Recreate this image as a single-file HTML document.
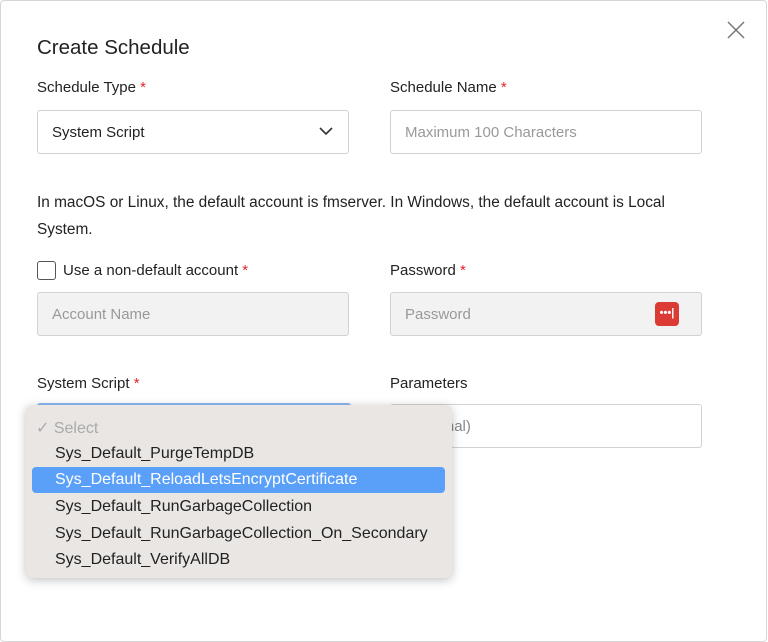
<!DOCTYPE html><html><head><style>
body{margin:0;width:768px;height:611px;background:#fff;font-family:"Liberation Sans",sans-serif;position:relative;overflow:hidden;color:#222}
.modal{position:absolute;left:0;top:0;width:765px;height:640px;border:1px solid #d6d6d6;border-radius:4px;background:#fff}
.a{position:absolute}
.lbl{font-size:15px;color:#222}
.r{color:#e0262a}
.in{position:absolute;box-sizing:border-box;height:44px;border:1px solid #d2d2d2;border-radius:3px;font-size:15px;padding-left:14px;line-height:42px;color:#999}
.item{position:absolute;left:29px;font-size:16px;color:#222}
</style></head><body>
<div class="modal"></div>
<svg class="a" style="left:727px;top:21px" width="18" height="18"><path d="M1 1L17 17M17 1L1 17" stroke="#777" stroke-width="1.5"/></svg>
<div class="a" style="left:37px;top:36px;font-size:20.5px">Create Schedule</div>
<div class="a lbl" style="left:37px;top:79px">Schedule Type <span class="r">*</span></div>
<div class="a lbl" style="left:390px;top:79px">Schedule Name <span class="r">*</span></div>
<div class="in" style="left:37px;top:110px;width:312px;color:#222;line-height:44px">System Script</div>
<svg class="a" style="left:319px;top:127px" width="14" height="9"><path d="M1 1L7 7L13 1" stroke="#333" stroke-width="1.6" fill="none"/></svg>
<div class="in" style="left:390px;top:110px;width:312px;line-height:44px">Maximum 100 Characters</div>
<div class="a" style="left:37px;top:189px;font-size:15.4px;line-height:27px;width:680px">In macOS or Linux, the default account is fmserver. In Windows, the default account is Local System.</div>
<div class="a" style="left:37px;top:261px;width:17px;height:17px;border:1.5px solid #555;border-radius:3px"></div>
<div class="a lbl" style="left:63px;top:262px">Use a non-default account <span class="r">*</span></div>
<div class="a lbl" style="left:390px;top:262px">Password <span class="r">*</span></div>
<div class="in" style="left:37px;top:292px;width:312px;background:#f2f2f2;line-height:44px">Account Name</div>
<div class="in" style="left:390px;top:292px;width:312px;background:#f2f2f2;line-height:44px">Password</div>
<div class="a" style="left:655px;top:302px;width:24px;height:24px;background:#dc3a35;border-radius:4px;color:#fff;font-size:11px;line-height:22px;text-align:center;font-weight:bold">•••|</div>
<div class="a lbl" style="left:37px;top:375px">System Script <span class="r">*</span></div>
<div class="a lbl" style="left:390px;top:375px">Parameters</div>
<div class="in" style="left:37px;top:403px;width:314px;border:2px solid #8ab8f5"></div>
<div class="in" style="left:390px;top:404px;width:312px;color:#888;line-height:44px">(Optional)</div>
<div class="a" style="left:26px;top:405px;width:426px;height:173px;background:#e9e6e4;border-radius:7px;box-shadow:0 2px 10px rgba(0,0,0,.25)">
<div class="item" style="left:10px;top:13px;color:#aaa">✓ Select</div>
<div class="item" style="top:40px">Sys_Default_PurgeTempDB</div>
<div class="a" style="left:6px;top:62px;width:413px;height:26px;background:#5ba0f8;border-radius:4px"></div>
<div class="item" style="top:66px;color:#fff">Sys_Default_ReloadLetsEncryptCertificate</div>
<div class="item" style="top:93px">Sys_Default_RunGarbageCollection</div>
<div class="item" style="top:120px">Sys_Default_RunGarbageCollection_On_Secondary</div>
<div class="item" style="top:146px">Sys_Default_VerifyAllDB</div>
</div>
</body></html>
